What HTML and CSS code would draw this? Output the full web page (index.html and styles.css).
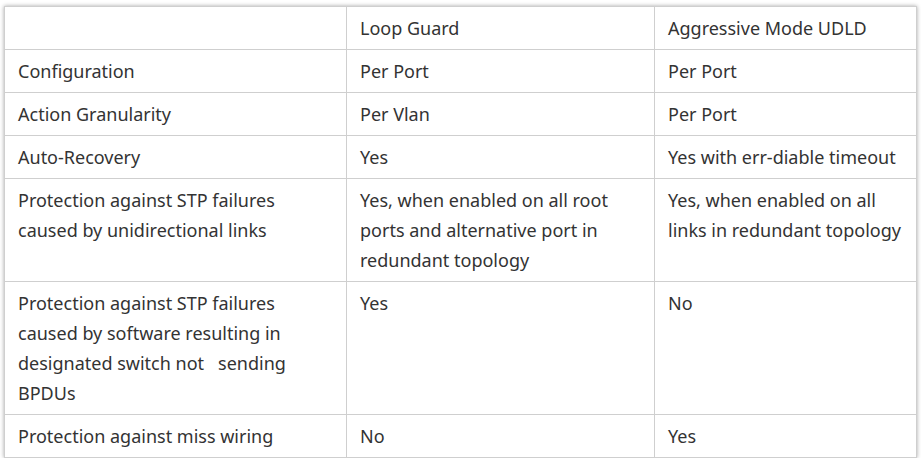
FILE: index.html
```html
<!DOCTYPE html>
<html>
<head>
<meta charset="utf-8">
<link rel="stylesheet" href="styles.css">
</head>
<body>
<table class="cmp">
  <colgroup>
    <col class="c1"><col class="c2"><col class="c3">
  </colgroup>
  <tr><td></td><td>Loop Guard</td><td>Aggressive Mode UDLD</td></tr>
  <tr><td>Configuration</td><td>Per Port</td><td>Per Port</td></tr>
  <tr><td>Action Granularity</td><td>Per Vlan</td><td>Per Port</td></tr>
  <tr><td>Auto-Recovery</td><td>Yes</td><td>Yes with err-diable timeout</td></tr>
  <tr><td>Protection against STP failures<br>caused by unidirectional links</td><td>Yes, when enabled on all root<br>ports and alternative port in<br>redundant topology</td><td>Yes, when enabled on all<br>links in redundant topology</td></tr>
  <tr><td>Protection against STP failures<br>caused by software resulting in<br>designated switch not &nbsp; sending<br>BPDUs</td><td>Yes</td><td>No</td></tr>
  <tr><td>Protection against miss wiring</td><td>No</td><td>Yes</td></tr>
</table>
</body>
</html>
```
FILE: styles.css
```css
html, body { margin: 0; padding: 0; background: #fff; }
body { padding: 6px 0 0 4px; }
.cmp {
  border-collapse: collapse;
  table-layout: fixed;
  width: 912px;
  font-family: "Noto Sans", sans-serif;
  font-size: 18px;
  color: #333;
  box-shadow: 0 0 4px rgba(0,0,0,0.35);
}
.c1 { width: 342px; }
.c2 { width: 308px; }
.c3 { width: 262px; }
.cmp td {
  border: 1px solid #cfcfcf;
  padding: 6px 13px 6px 13px;
  line-height: 30px;
  vertical-align: top;
  white-space: nowrap;
}
```
